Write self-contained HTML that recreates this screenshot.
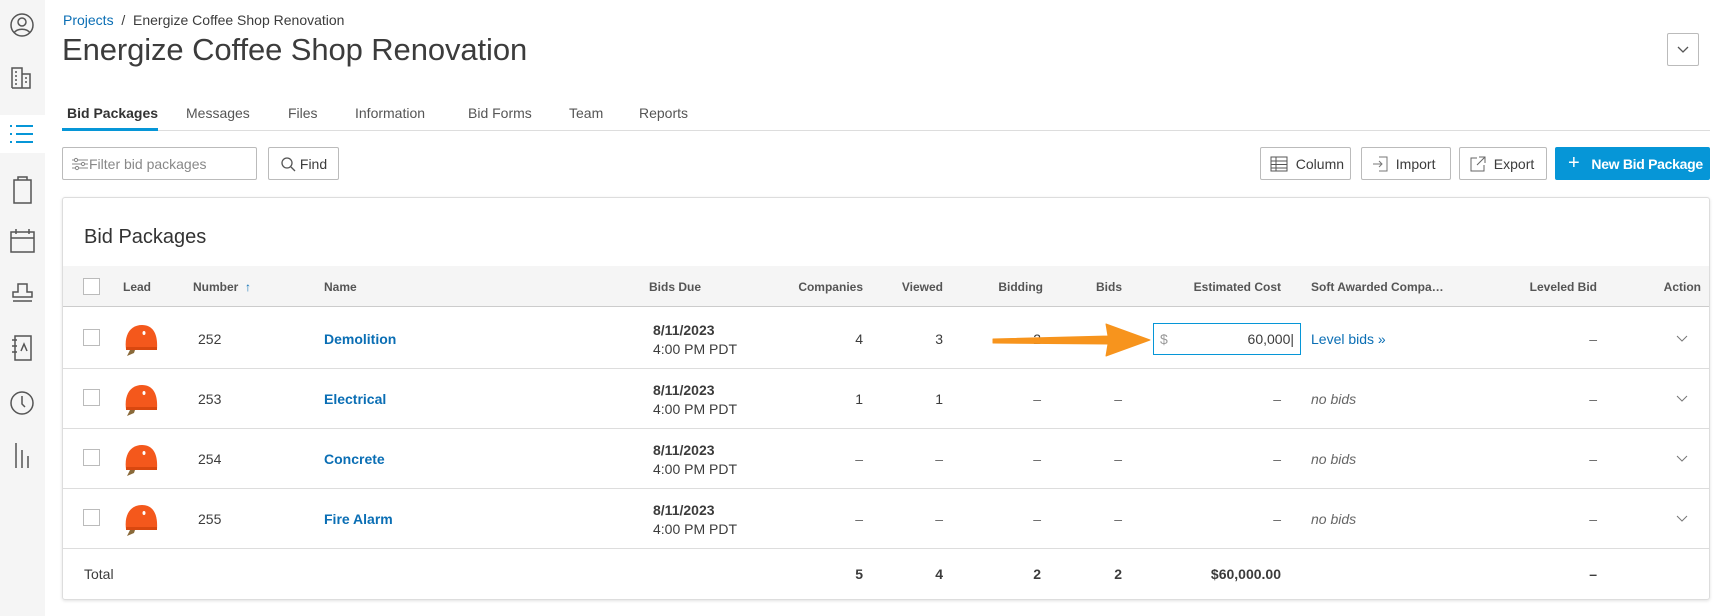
<!DOCTYPE html>
<html><head><meta charset="utf-8"><style>
*{box-sizing:border-box;margin:0;padding:0}
body{width:1715px;height:616px;overflow:hidden;background:#fff;font-family:"Liberation Sans",sans-serif;color:#3c3c3c;position:relative;font-size:14px}
.a{position:absolute;white-space:nowrap}
.side{left:0;top:0;width:45px;height:616px;background:#f5f5f5}
.btn{position:absolute;border:1px solid #bbb;border-radius:2px;background:#fff;height:33px;display:flex;align-items:center;font-size:14px;color:#3c3c3c}
.hd{font-size:12px;font-weight:bold;color:#555}
.row{position:absolute;left:62px;width:1648px;border-top:1px solid #ddd}
.cb{position:absolute;width:17px;height:17px;border:1px solid #bbb;background:#fff}
.r{text-align:right}
.lnk{color:#0a6eb4;font-weight:bold}
.dash{color:#666}
</style></head><body>
<div class="a side"></div>
<div class="a" style="left:0;top:115px;width:45px;height:38px;background:#fff"></div>
<svg class="a" style="left:0;top:0" width="45" height="616" fill="none" stroke="#555" stroke-width="1.5">
<circle cx="22" cy="25" r="11"/><circle cx="22" cy="22" r="4"/><path d="M14 33c3-5 13-5 16 0"/>
<path d="M12 88V68h10v20M22 74h8v14H12M15 72h2M19 72h0M15 76h2M15 80h2M15 84h2M25 78h2M25 82h2"/>
<g stroke="#0696d7" stroke-width="2"><path d="M16 126h17M16 134h17M16 142h17"/><path d="M10 126h2M10 134h2M10 142h2"/></g>
<path d="M14 180h17v23H14zM18 180v-3h9v3"/>
<path d="M11 232h23v20H11zM11 238h23M16 229v5M29 229v5"/>
<path d="M18 284h9v8h5v5H13v-5h5zM13 301h19"/>
<path d="M15 336h16v24H15zM12 340h5M12 346h5M12 352h5M21 351l3-7 3 7"/>
<circle cx="22" cy="403" r="11"/><path d="M22 396v8l3 3"/>
<path d="M16 443v25M22 450v18M28 456v12"/>
</svg>
<div class="a" style="left:63px;top:12px;font-size:14px"><span style="color:#0a6eb4">Projects</span> &nbsp;/ &nbsp;Energize Coffee Shop Renovation</div>
<div class="a" style="left:62px;top:32px;font-size:31px;color:#3c3c3c;letter-spacing:-0.1px">Energize Coffee Shop Renovation</div>
<div class="btn" style="left:1667px;top:33px;width:32px;height:33px;justify-content:center"><svg width="12" height="8"><path d="M1 1l5 5 5-5" fill="none" stroke="#555" stroke-width="1.3"/></svg></div>
<div class="a" style="left:62px;top:130px;width:1648px;height:1px;background:#ddd"></div>
<div class="a" style="left:62px;top:128px;width:96px;height:3px;background:#0696d7"></div>
<div class="a" style="top:105px;left:67px;font-weight:bold;color:#333">Bid Packages</div>
<div class="a" style="top:105px;left:186px;color:#555">Messages</div>
<div class="a" style="top:105px;left:288px;color:#555">Files</div>
<div class="a" style="top:105px;left:355px;color:#555">Information</div>
<div class="a" style="top:105px;left:468px;color:#555">Bid Forms</div>
<div class="a" style="top:105px;left:569px;color:#555">Team</div>
<div class="a" style="top:105px;left:639px;color:#555">Reports</div>
<div class="btn" style="left:62px;top:147px;width:195px;color:#888;padding-left:8px"><svg width="18" height="14" fill="none" stroke="#888"><path d="M1 3h16M1 7h16M1 11h16"/><circle cx="5" cy="3" r="1.6" fill="#fff"/><circle cx="12" cy="7" r="1.6" fill="#fff"/><circle cx="6" cy="11" r="1.6" fill="#fff"/></svg>Filter bid packages</div>
<div class="btn" style="left:268px;top:147px;width:71px;padding-left:11px"><svg width="16" height="16" fill="none" stroke="#555" stroke-width="1.3"><circle cx="7" cy="7" r="5"/><path d="M11 11l4 4"/></svg>&nbsp;Find</div>
<div class="btn" style="left:1260px;top:147px;width:91px;padding-left:9px"><svg width="18" height="16" fill="none" stroke="#555"><rect x="1" y="1" width="16" height="14"/><path d="M1 5h16M1 8.5h16M1 12h16M6 1v14"/></svg>&nbsp;&nbsp;Column</div>
<div class="btn" style="left:1361px;top:147px;width:90px;padding-left:10px"><svg width="16" height="16" fill="none" stroke="#777"><path d="M7 1h8v14H7M1 8h9M7 5l3 3-3 3"/></svg>&nbsp;&nbsp;Import</div>
<div class="btn" style="left:1459px;top:147px;width:88px;padding-left:10px"><svg width="16" height="16" fill="none" stroke="#666"><path d="M7 2H1v13h13V9M9 1h6v6M15 1L7 9"/></svg>&nbsp;&nbsp;Export</div>
<div class="btn" style="left:1555px;top:147px;width:155px;background:#0696d7;border-color:#0696d7;color:#fff;font-weight:bold;padding-left:12px;letter-spacing:-0.3px"><span style="font-weight:normal;font-size:20px;margin-right:12px">+</span>New Bid Package</div>
<div class="a" style="left:62px;top:197px;width:1648px;height:403px;border:1px solid #ddd;border-radius:3px;box-shadow:0 1px 3px rgba(0,0,0,.12)"></div>
<div class="a" style="left:84px;top:226px;font-size:20px;color:#333">Bid Packages</div>
<div class="a" style="left:63px;top:266px;width:1646px;height:41px;background:#f5f5f5;border-bottom:1px solid #ccc"></div>
<div class="cb" style="left:83px;top:278px"></div>
<div class="a hd" style="left:123px;top:280px">Lead</div>
<div class="a hd" style="left:193px;top:280px">Number &nbsp;<span style="color:#0a6eb4">↑</span></div>
<div class="a hd" style="left:324px;top:280px">Name</div>
<div class="a hd" style="left:649px;top:280px">Bids Due</div>
<div class="a hd r" style="left:763px;width:100px;top:280px">Companies</div>
<div class="a hd r" style="left:843px;width:100px;top:280px">Viewed</div>
<div class="a hd r" style="left:943px;width:100px;top:280px">Bidding</div>
<div class="a hd r" style="left:1022px;width:100px;top:280px">Bids</div>
<div class="a hd r" style="left:1131px;width:150px;top:280px">Estimated Cost</div>
<div class="a hd" style="left:1311px;top:280px">Soft Awarded Compa…</div>
<div class="a hd r" style="left:1497px;width:100px;top:280px">Leveled Bid</div>
<div class="a hd r" style="left:1601px;width:100px;top:280px">Action</div>

<div class="row" style="top:368px"></div>
<div class="row" style="top:428px"></div>
<div class="row" style="top:488px"></div>
<div class="row" style="top:548px"></div>

<svg width="0" height="0" style="position:absolute"><defs><symbol id="h" viewBox="0 0 40 36"><path d="M5 27C3 12 10 3 21 3s16 9 15 24z" fill="#f4581c"/><path d="M5 25h31v3H5z" fill="#d9480f"/><ellipse cx="23" cy="11" rx="1.5" ry="2" fill="#fff"/><path d="M9 28l-3 6 7-3 1-3z" fill="#8a6a3a"/></symbol></defs></svg>

<div class="cb" style="left:83px;top:329px"></div><svg class="a" style="left:121px;top:322px" width="40" height="36"><use href="#h"/></svg>
<div class="a" style="left:198px;top:331px">252</div><div class="a lnk" style="left:324px;top:331px">Demolition</div>
<div class="a" style="left:653px;top:322px;font-weight:bold">8/11/2023</div><div class="a" style="left:653px;top:341px">4:00 PM PDT</div>
<div class="a r" style="left:763px;width:100px;top:331px">4</div><div class="a r" style="left:843px;width:100px;top:331px">3</div><div class="a r" style="left:943px;width:98px;top:331px">2</div>
<div class="a" style="left:1153px;top:323px;width:148px;height:32px;border:1px solid #0696d7;background:#fff"></div>
<div class="a" style="left:1160px;top:331px;color:#999">$</div><div class="a r" style="left:1190px;width:104px;top:331px">60,000|</div>
<div class="a" style="left:1311px;top:331px;color:#0a6eb4">Level bids »</div>
<div class="a dash r" style="left:1497px;width:100px;top:331px">–</div>
<svg class="a" style="left:1676px;top:335px" width="12" height="8"><path d="M1 1l5 5 5-5" fill="none" stroke="#777"/></svg>
<svg class="a" style="left:990px;top:320px" width="165" height="40"><path d="M3 19L118 16 116 4 160 20 116 36 118 24 3 23z" fill="#f7941d" stroke="#f7941d" stroke-linejoin="round"/></svg>

<div class="cb" style="left:83px;top:389px"></div><svg class="a" style="left:121px;top:382px" width="40" height="36"><use href="#h"/></svg>
<div class="a" style="left:198px;top:391px">253</div><div class="a lnk" style="left:324px;top:391px">Electrical</div>
<div class="a" style="left:653px;top:382px;font-weight:bold">8/11/2023</div><div class="a" style="left:653px;top:401px">4:00 PM PDT</div>
<div class="a r" style="left:763px;width:100px;top:391px">1</div><div class="a r" style="left:843px;width:100px;top:391px">1</div>
<div class="a dash r" style="left:943px;width:98px;top:391px">–</div><div class="a dash r" style="left:1022px;width:100px;top:391px">–</div><div class="a dash r" style="left:1181px;width:100px;top:391px">–</div>
<div class="a" style="left:1311px;top:391px;font-style:italic;color:#666">no bids</div><div class="a dash r" style="left:1497px;width:100px;top:391px">–</div>
<svg class="a" style="left:1676px;top:395px" width="12" height="8"><path d="M1 1l5 5 5-5" fill="none" stroke="#777"/></svg>

<div class="cb" style="left:83px;top:449px"></div><svg class="a" style="left:121px;top:442px" width="40" height="36"><use href="#h"/></svg>
<div class="a" style="left:198px;top:451px">254</div><div class="a lnk" style="left:324px;top:451px">Concrete</div>
<div class="a" style="left:653px;top:442px;font-weight:bold">8/11/2023</div><div class="a" style="left:653px;top:461px">4:00 PM PDT</div>
<div class="a dash r" style="left:763px;width:100px;top:451px">–</div><div class="a dash r" style="left:843px;width:100px;top:451px">–</div>
<div class="a dash r" style="left:943px;width:98px;top:451px">–</div><div class="a dash r" style="left:1022px;width:100px;top:451px">–</div><div class="a dash r" style="left:1181px;width:100px;top:451px">–</div>
<div class="a" style="left:1311px;top:451px;font-style:italic;color:#666">no bids</div><div class="a dash r" style="left:1497px;width:100px;top:451px">–</div>
<svg class="a" style="left:1676px;top:455px" width="12" height="8"><path d="M1 1l5 5 5-5" fill="none" stroke="#777"/></svg>

<div class="cb" style="left:83px;top:509px"></div><svg class="a" style="left:121px;top:502px" width="40" height="36"><use href="#h"/></svg>
<div class="a" style="left:198px;top:511px">255</div><div class="a lnk" style="left:324px;top:511px">Fire Alarm</div>
<div class="a" style="left:653px;top:502px;font-weight:bold">8/11/2023</div><div class="a" style="left:653px;top:521px">4:00 PM PDT</div>
<div class="a dash r" style="left:763px;width:100px;top:511px">–</div><div class="a dash r" style="left:843px;width:100px;top:511px">–</div>
<div class="a dash r" style="left:943px;width:98px;top:511px">–</div><div class="a dash r" style="left:1022px;width:100px;top:511px">–</div><div class="a dash r" style="left:1181px;width:100px;top:511px">–</div>
<div class="a" style="left:1311px;top:511px;font-style:italic;color:#666">no bids</div><div class="a dash r" style="left:1497px;width:100px;top:511px">–</div>
<svg class="a" style="left:1676px;top:515px" width="12" height="8"><path d="M1 1l5 5 5-5" fill="none" stroke="#777"/></svg>

<div class="a" style="left:84px;top:566px">Total</div>
<div class="a r" style="left:763px;width:100px;top:566px;font-weight:bold">5</div>
<div class="a r" style="left:843px;width:100px;top:566px;font-weight:bold">4</div>
<div class="a r" style="left:943px;width:98px;top:566px;font-weight:bold">2</div>
<div class="a r" style="left:1022px;width:100px;top:566px;font-weight:bold">2</div>
<div class="a r" style="left:1131px;width:150px;top:566px;font-weight:bold">$60,000.00</div>
<div class="a r" style="left:1497px;width:100px;top:566px;font-weight:bold">–</div>
</body></html>
